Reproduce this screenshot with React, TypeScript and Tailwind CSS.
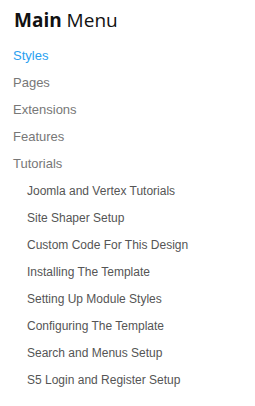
import React from "react";

const main = ["Styles", "Pages", "Extensions", "Features", "Tutorials"];
const sub = [
  "Joomla and Vertex Tutorials",
  "Site Shaper Setup",
  "Custom Code For This Design",
  "Installing The Template",
  "Setting Up Module Styles",
  "Configuring The Template",
  "Search and Menus Setup",
  "S5 Login and Register Setup",
];

export default function App() {
  return (
    <div className="w-[255px] h-[406px] bg-white pl-[13px] pt-[7px]" style={{ fontFamily: '"Liberation Sans", Arial, sans-serif' }}>
      <h1 className="text-[19px] leading-[26px] text-[#111] pl-px" style={{ fontFamily: '"Open Sans", sans-serif' }}>
        <span className="font-bold">Main</span> Menu
      </h1>
      <ul className="mt-[9px]">
        {main.map((m, i) => (
          <li key={m} className={`h-[27px] flex items-center text-[13px] ${i === 0 ? "text-[#2a9ff0]" : "text-[#777]"}`}>
            {m}
          </li>
        ))}
        {sub.map((s) => (
          <li key={s} className="h-[27px] flex items-center text-[12px] text-[#555] pl-[14px]">
            {s}
          </li>
        ))}
      </ul>
    </div>
  );
}
